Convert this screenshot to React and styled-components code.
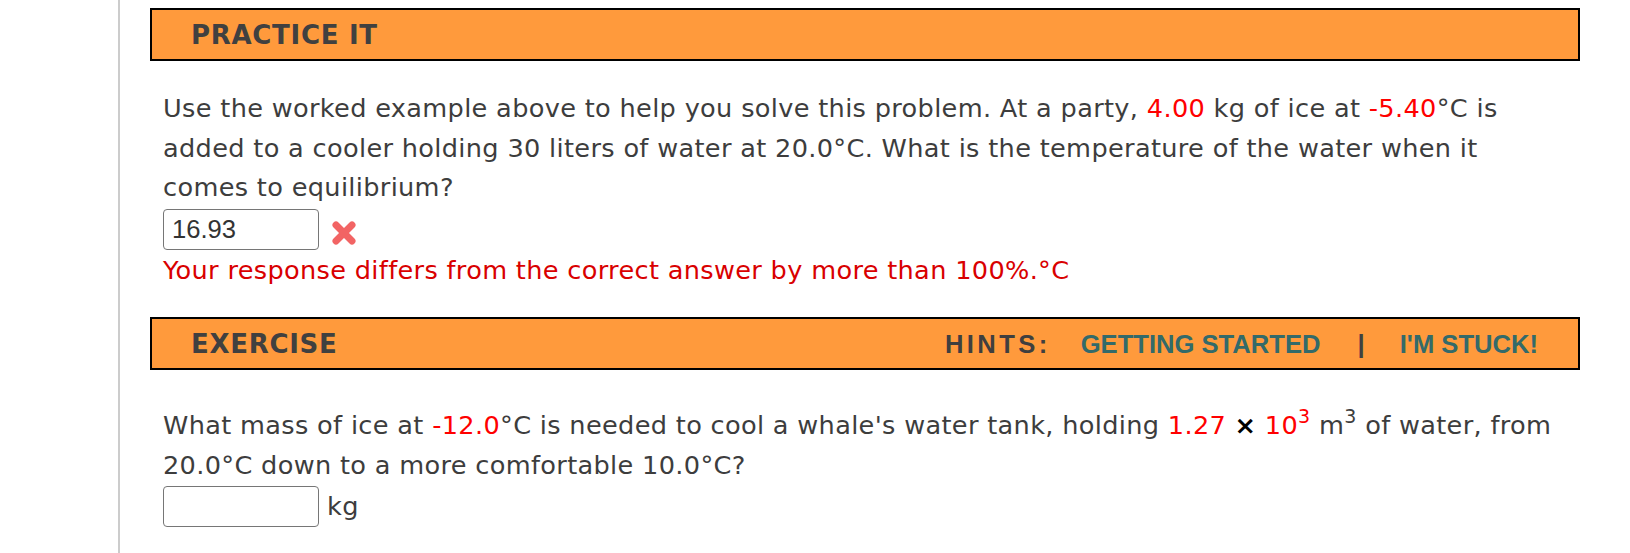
import React from "react";
import styled, { createGlobalStyle } from "styled-components";

const GlobalStyle = createGlobalStyle`
  html, body {
    margin: 0;
    padding: 0;
    background: #ffffff;
  }
  body {
    font-family: "DejaVu Sans", Verdana, sans-serif;
    color: #3d3d3d;
  }
`;

const Page = styled.div`
  display: flex;
  min-height: 100vh;
`;

const Gutter = styled.div`
  width: 118px;
  flex: none;
`;

const Main = styled.main`
  flex: 1;
  border-left: 2px solid #cccccc;
  padding: 8px 50px 0 30px;
`;

const Section = styled.section`
  margin-top: ${(p) => p.$gap || 0}px;
`;

const HeaderBar = styled.div`
  display: flex;
  justify-content: space-between;
  align-items: baseline;
  background: #ff9a3c;
  border: 2px solid #000000;
  padding: 3px 40px 1px 39px;
  line-height: 45px;
`;

const Title = styled.h2`
  margin: 0;
  font-family: "DejaVu Sans", Verdana, sans-serif;
  font-size: 26px;
  font-weight: bold;
  letter-spacing: 0.7px;
  color: #404040;
  text-transform: uppercase;
`;

const Hints = styled.div`
  display: flex;
  align-items: baseline;
  font-family: "Liberation Sans", Arial, sans-serif;
  font-size: 25.6px;
  font-weight: bold;
`;

const HintsLabel = styled.span`
  color: #3f3f3f;
  letter-spacing: 3.4px;
  margin-right: 30px;
`;

const HintLink = styled.a`
  color: #336a6a;
  text-decoration: none;
  cursor: pointer;
`;

const Divider = styled.span`
  color: #404040;
  margin: 0 35px 0 37px;
`;

const Body = styled.div`
  padding: 0 22px 0 13px;
`;

const Prompt = styled.p`
  margin: ${(p) => p.$top}px 0 0;
  font-size: 25.6px;
  line-height: 39.5px;
  letter-spacing: 0.33px;
  color: #3d3d3d;
`;

const Value = styled.span`
  color: #ff0000;
`;

const Times = styled.span`
  color: #000000;
  font-weight: bold;
`;

const Sup = styled.sup`
  font-size: 19px;
  line-height: 0;
  vertical-align: 11px;
  color: ${(p) => p.$color || "inherit"};
`;

const AnswerRow = styled.div`
  display: flex;
  align-items: center;
  gap: ${(p) => p.$gap}px;
  margin-top: 1px;
  font-size: 25.6px;
  line-height: 39.5px;
  letter-spacing: 0.33px;
`;

const AnswerInput = styled.input`
  box-sizing: border-box;
  width: 156px;
  height: 41px;
  margin: 0;
  padding: 0 8px;
  border: 1px solid #767676;
  border-radius: 4px;
  font-family: "Liberation Sans", Arial, sans-serif;
  font-size: 25.6px;
  letter-spacing: 0;
  color: #333333;
  background: #ffffff;
  outline: none;
`;

const WrongMark = styled.svg`
  width: 28px;
  height: 28px;
  margin-top: 7px;
  flex: none;
`;

const Unit = styled.span`
  color: #3d3d3d;
`;

const Feedback = styled.div`
  margin-top: 1px;
  font-size: 25.6px;
  line-height: 39.5px;
  letter-spacing: 0.33px;
  color: #d90000;
`;

function CrossIcon() {
  return (
    <WrongMark viewBox="0 0 28 28" aria-label="incorrect">
      <g stroke="#f26464" strokeWidth="7" strokeLinecap="round">
        <line x1="6" y1="6" x2="22" y2="22" />
        <line x1="22" y1="6" x2="6" y2="22" />
      </g>
    </WrongMark>
  );
}

export default function App() {
  return (
    <>
      <GlobalStyle />
      <Page>
        <Gutter />
        <Main>
          <Section>
            <HeaderBar>
              <Title>Practice It</Title>
            </HeaderBar>
            <Body>
              <Prompt $top={28}>
                Use the worked example above to help you solve this problem. At a party,{" "}
                <Value>4.00</Value> kg of ice at <Value>-5.40</Value>°C is added to a cooler
                holding 30 liters of water at 20.0°C. What is the temperature of the water when
                it comes to equilibrium?
              </Prompt>
              <AnswerRow $gap={11}>
                <AnswerInput type="text" defaultValue="16.93" />
                <CrossIcon />
              </AnswerRow>
              <Feedback>Your response differs from the correct answer by more than 100%.°C</Feedback>
            </Body>
          </Section>
          <Section $gap={27}>
            <HeaderBar>
              <Title>Exercise</Title>
              <Hints>
                <HintsLabel>HINTS:</HintsLabel>
                <HintLink>GETTING STARTED</HintLink>
                <Divider>|</Divider>
                <HintLink>I'M STUCK!</HintLink>
              </Hints>
            </HeaderBar>
            <Body>
              <Prompt $top={36}>
                What mass of ice at <Value>-12.0</Value>°C is needed to cool a whale's water tank,
                holding <Value>1.27</Value> <Times>×</Times> <Value>10</Value>
                <Sup $color="#ff0000">3</Sup> m<Sup>3</Sup> of water, from 20.0°C down to a more
                comfortable 10.0°C?
              </Prompt>
              <AnswerRow $gap={8}>
                <AnswerInput type="text" defaultValue="" />
                <Unit>kg</Unit>
              </AnswerRow>
            </Body>
          </Section>
        </Main>
      </Page>
    </>
  );
}
